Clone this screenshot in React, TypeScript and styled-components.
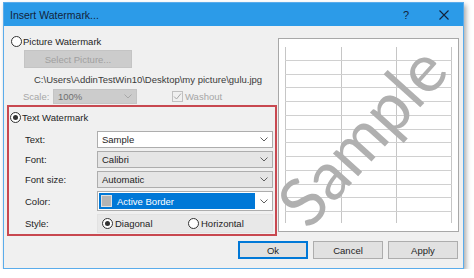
import React from 'react';
import styled, { createGlobalStyle } from 'styled-components';

const GlobalStyle = createGlobalStyle`
  html, body {
    margin: 0;
    padding: 0;
    background: #ffffff;
  }
  body {
    font-family: "Liberation Sans", Arial, sans-serif;
    font-size: 9.5px;
    color: #1e1e1e;
  }
`;

const Screen = styled.div`
  padding: 2px 0 0 3px;
`;

const Window = styled.div`
  box-sizing: border-box;
  width: 461px;
  height: 267px;
  border: 1px solid #5aaceb;
  background: #f0f0f0;
  box-shadow: 2px 3px 5px rgba(0, 0, 0, 0.35);
  display: flex;
  flex-direction: column;
`;

const TitleBar = styled.div`
  height: 23px;
  background: #2c9be8;
  display: flex;
  align-items: center;
  padding-left: 6px;
`;

const Title = styled.div`
  flex: 1;
  font-size: 10.5px;
  color: #13233a;
`;

const TitleButton = styled.div`
  width: 38px;
  height: 23px;
  display: flex;
  align-items: center;
  justify-content: center;
  font-size: 11px;
  color: #13233a;
`;

const Main = styled.div`
  display: flex;
  gap: 1px;
  padding: 0 4px 0 3px;
`;

const LeftColumn = styled.div`
  width: 270px;
  display: flex;
  flex-direction: column;
  padding-top: 8px;
`;

const OptionRow = styled.label<{ $indent?: number }>`
  display: flex;
  align-items: center;
  gap: 1px;
  height: 14px;
  padding-left: ${(p) => p.$indent ?? 0}px;
`;

const RadioCircle = styled.span<{ $checked?: boolean }>`
  box-sizing: border-box;
  width: 11px;
  height: 11px;
  border-radius: 50%;
  border: 1px solid #333333;
  background: #ffffff;
  display: flex;
  align-items: center;
  justify-content: center;
  &::after {
    content: '';
    width: 5px;
    height: 5px;
    border-radius: 50%;
    background: #333333;
    display: ${(p) => (p.$checked ? 'block' : 'none')};
  }
`;

const SelectButton = styled.div`
  box-sizing: border-box;
  margin: 2px 0 0 17px;
  width: 108px;
  height: 18px;
  background: #cccccc;
  border: 1px solid #c4c4c4;
  color: #a0a0a0;
  display: flex;
  align-items: center;
  justify-content: center;
`;

const PathText = styled.div`
  margin: 5px 0 0 27px;
  height: 14px;
  line-height: 14px;
  color: #3a3a3a;
  white-space: nowrap;
`;

const ScaleRow = styled.div`
  margin-top: 2px;
  height: 15px;
  display: flex;
  align-items: center;
  padding-left: 16px;
`;

const DisabledLabel = styled.span<{ $width?: number }>`
  color: #a6a6a6;
  width: ${(p) => (p.$width ? `${p.$width}px` : 'auto')};
`;

const Combo = styled.div<{ $bg?: string; $width?: number; $disabled?: boolean }>`
  box-sizing: border-box;
  width: ${(p) => (p.$width ? `${p.$width}px` : 'auto')};
  height: 100%;
  background: ${(p) => p.$bg ?? '#ffffff'};
  border: 1px solid ${(p) => (p.$disabled ? '#c4c4c4' : '#adadad')};
  color: ${(p) => (p.$disabled ? '#707070' : '#1e1e1e')};
  display: flex;
  align-items: center;
  padding-left: 4px;
`;

const ComboText = styled.span`
  flex: 1;
  white-space: nowrap;
`;

const Chevron = styled.span`
  width: 17px;
  display: flex;
  align-items: center;
  justify-content: center;
`;

const CheckBox = styled.span`
  box-sizing: border-box;
  width: 11px;
  height: 11px;
  border: 1px solid #c0c0c0;
  background: #f0f0f0;
  display: flex;
  align-items: center;
  justify-content: center;
  margin: 0 2px 0 35px;
`;

const Group = styled.div`
  box-sizing: border-box;
  margin-top: 1px;
  height: 131px;
  border: 2px solid #c84850;
  display: flex;
  flex-direction: column;
  padding-top: 3px;
`;

const FieldGrid = styled.div`
  margin-top: 7px;
  padding-left: 16px;
  display: grid;
  grid-template-columns: 72px 176px;
  grid-template-rows: 17px 17px 17px 20px 19px;
  row-gap: 3px;
`;

const FieldLabel = styled.div`
  display: flex;
  align-items: center;
`;

const Selection = styled.div`
  flex: 1;
  align-self: stretch;
  margin: 1px 0 1px -3px;
  background: #0078d7;
  color: #ffffff;
  display: flex;
  align-items: center;
  gap: 5px;
  padding-left: 2px;
`;

const Swatch = styled.span`
  box-sizing: border-box;
  width: 11px;
  height: 12px;
  background: #b4b4b4;
  border: 1px solid #e0e0e0;
`;

const StylePanel = styled.div`
  box-sizing: border-box;
  background: #e8e8e8;
  border: 1px solid #e2e2e2;
  display: flex;
  align-items: center;
  padding-left: 4px;
`;

const StyleOption = styled.label<{ $width?: number }>`
  display: flex;
  align-items: center;
  gap: 2px;
  width: ${(p) => (p.$width ? `${p.$width}px` : 'auto')};
`;

const Preview = styled.div`
  box-sizing: border-box;
  margin-top: 12px;
  width: 181px;
  height: 194px;
  background: #ffffff;
  border: 1px solid #a8a8a8;
  overflow: hidden;
`;

const Footer = styled.div`
  display: flex;
  justify-content: flex-end;
  gap: 5px;
  padding: 5px 5px 0 0;
`;

const DialogButton = styled.div<{ $default?: boolean }>`
  box-sizing: border-box;
  width: 70px;
  height: 18px;
  background: #e1e1e1;
  border: 1px solid ${(p) => (p.$default ? '#0078d7' : '#adadad')};
  box-shadow: ${(p) => (p.$default ? 'inset 0 0 0 1px #0078d7' : 'none')};
  display: flex;
  align-items: center;
  justify-content: center;
`;

const ChevronIcon = ({ color = '#606060' }: { color?: string }) => (
  <svg width="8" height="5" viewBox="0 0 8 5">
    <path d="M0.5 0.5 L4 4 L7.5 0.5" fill="none" stroke={color} strokeWidth="1" />
  </svg>
);

const rows = Array.from({ length: 12 }, (_, i) => 21 + i * 13.73);
const cols = [6, 62, 117, 172];

const PagePreview = () => (
  <svg width="179" height="192" viewBox="0 0 179 192">
    {cols.map((x) => (
      <line key={`v${x}`} x1={x + 0.5} y1={8} x2={x + 0.5} y2={184} stroke="#c6c6c6" strokeWidth="1" />
    ))}
    {rows.map((y) => (
      <line key={`h${y}`} x1={6} y1={Math.round(y) + 0.5} x2={173} y2={Math.round(y) + 0.5} stroke="#d0d0d0" strokeWidth="1" />
    ))}
    <text
      x={101}
      y={113}
      textAnchor="middle"
      fontFamily="Lato, 'Open Sans', sans-serif"
      fontSize={67}
      fill="#b0b0b0"
      transform="rotate(-48 101 113)"
    >
      Sample
    </text>
  </svg>
);

export default function App() {
  return (
    <>
      <GlobalStyle />
      <Screen>
        <Window>
          <TitleBar>
            <Title>Insert Watermark...</Title>
            <TitleButton>?</TitleButton>
            <TitleButton>
              <svg width="10" height="10" viewBox="0 0 10 10">
                <path d="M0.5 0.5 L9.5 9.5 M9.5 0.5 L0.5 9.5" stroke="#13233a" strokeWidth="1.1" />
              </svg>
            </TitleButton>
          </TitleBar>
          <Main>
            <LeftColumn>
              <OptionRow $indent={4}>
                <RadioCircle />
                <span>Picture Watermark</span>
              </OptionRow>
              <SelectButton>Select Picture...</SelectButton>
              <PathText>C:\Users\AddinTestWin10\Desktop\my picture\gulu.jpg</PathText>
              <ScaleRow>
                <DisabledLabel $width={30}>Scale:</DisabledLabel>
                <Combo $bg="#cccccc" $width={84} $disabled>
                  <ComboText>100%</ComboText>
                  <Chevron>
                    <ChevronIcon color="#a8a8a8" />
                  </Chevron>
                </Combo>
                <CheckBox>
                  <svg width="9" height="9" viewBox="0 0 9 9">
                    <path d="M1 4.5 L3.5 7 L8 1.5" fill="none" stroke="#a8a8a8" strokeWidth="1" />
                  </svg>
                </CheckBox>
                <DisabledLabel>Washout</DisabledLabel>
              </ScaleRow>
              <Group>
                <OptionRow $indent={1}>
                  <RadioCircle $checked />
                  <span>Text Watermark</span>
                </OptionRow>
                <FieldGrid>
                  <FieldLabel>Text:</FieldLabel>
                  <Combo>
                    <ComboText>Sample</ComboText>
                    <Chevron>
                      <ChevronIcon />
                    </Chevron>
                  </Combo>
                  <FieldLabel>Font:</FieldLabel>
                  <Combo $bg="#e5e5e5">
                    <ComboText>Calibri</ComboText>
                    <Chevron>
                      <ChevronIcon />
                    </Chevron>
                  </Combo>
                  <FieldLabel>Font size:</FieldLabel>
                  <Combo $bg="#e5e5e5">
                    <ComboText>Automatic</ComboText>
                    <Chevron>
                      <ChevronIcon />
                    </Chevron>
                  </Combo>
                  <FieldLabel>Color:</FieldLabel>
                  <Combo>
                    <Selection>
                      <Swatch />
                      <span>Active Border</span>
                    </Selection>
                    <Chevron>
                      <ChevronIcon />
                    </Chevron>
                  </Combo>
                  <FieldLabel>Style:</FieldLabel>
                  <StylePanel>
                    <StyleOption $width={86}>
                      <RadioCircle $checked />
                      <span>Diagonal</span>
                    </StyleOption>
                    <StyleOption>
                      <RadioCircle />
                      <span>Horizontal</span>
                    </StyleOption>
                  </StylePanel>
                </FieldGrid>
              </Group>
            </LeftColumn>
            <Preview>
              <PagePreview />
            </Preview>
          </Main>
          <Footer>
            <DialogButton $default>Ok</DialogButton>
            <DialogButton>Cancel</DialogButton>
            <DialogButton>Apply</DialogButton>
          </Footer>
        </Window>
      </Screen>
    </>
  );
}
